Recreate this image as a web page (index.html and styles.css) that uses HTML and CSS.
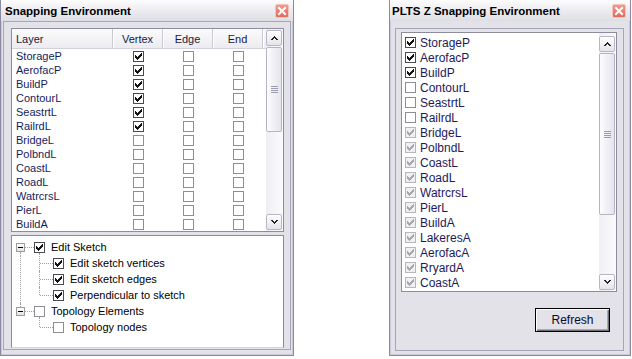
FILE: index.html
```html
<!DOCTYPE html>
<html>
<head>
<meta charset="utf-8">
<link rel="stylesheet" href="styles.css">
</head>
<body>
<div class="desk">
  <div class="win win-left">
    <div class="titlebar tb-left">
      <span class="title">Snapping Environment</span>
      <span class="close"><svg width="12" height="12" viewBox="0 0 12 12"><path d="M3 3L9 9M9 3L3 9" stroke="#fff" stroke-width="2" stroke-linecap="square"/></svg></span>
    </div>
    <div class="client">
      <div class="list">
        <div class="grid-main">
          <div class="hdr">
            <div class="hc layer">Layer</div>
            <div class="hc col">Vertex</div>
            <div class="hc col">Edge</div>
            <div class="hc col">End</div>
            <div class="hc fill"></div>
          </div>
          <div class="row"><div class="rc layer">StorageP</div><div class="rc col"><span class="cb on"><svg class="ck" viewBox="0 0 9 9"><use href="#chk"/></svg></span></div><div class="rc col"><span class="cb"></span></div><div class="rc col"><span class="cb"></span></div></div>
          <div class="row"><div class="rc layer">AerofacP</div><div class="rc col"><span class="cb on"><svg class="ck" viewBox="0 0 9 9"><use href="#chk"/></svg></span></div><div class="rc col"><span class="cb"></span></div><div class="rc col"><span class="cb"></span></div></div>
          <div class="row"><div class="rc layer">BuildP</div><div class="rc col"><span class="cb on"><svg class="ck" viewBox="0 0 9 9"><use href="#chk"/></svg></span></div><div class="rc col"><span class="cb"></span></div><div class="rc col"><span class="cb"></span></div></div>
          <div class="row"><div class="rc layer">ContourL</div><div class="rc col"><span class="cb on"><svg class="ck" viewBox="0 0 9 9"><use href="#chk"/></svg></span></div><div class="rc col"><span class="cb"></span></div><div class="rc col"><span class="cb"></span></div></div>
          <div class="row"><div class="rc layer">SeastrtL</div><div class="rc col"><span class="cb on"><svg class="ck" viewBox="0 0 9 9"><use href="#chk"/></svg></span></div><div class="rc col"><span class="cb"></span></div><div class="rc col"><span class="cb"></span></div></div>
          <div class="row"><div class="rc layer">RailrdL</div><div class="rc col"><span class="cb on"><svg class="ck" viewBox="0 0 9 9"><use href="#chk"/></svg></span></div><div class="rc col"><span class="cb"></span></div><div class="rc col"><span class="cb"></span></div></div>
          <div class="row"><div class="rc layer">BridgeL</div><div class="rc col"><span class="cb"></span></div><div class="rc col"><span class="cb"></span></div><div class="rc col"><span class="cb"></span></div></div>
          <div class="row"><div class="rc layer">PolbndL</div><div class="rc col"><span class="cb"></span></div><div class="rc col"><span class="cb"></span></div><div class="rc col"><span class="cb"></span></div></div>
          <div class="row"><div class="rc layer">CoastL</div><div class="rc col"><span class="cb"></span></div><div class="rc col"><span class="cb"></span></div><div class="rc col"><span class="cb"></span></div></div>
          <div class="row"><div class="rc layer">RoadL</div><div class="rc col"><span class="cb"></span></div><div class="rc col"><span class="cb"></span></div><div class="rc col"><span class="cb"></span></div></div>
          <div class="row"><div class="rc layer">WatrcrsL</div><div class="rc col"><span class="cb"></span></div><div class="rc col"><span class="cb"></span></div><div class="rc col"><span class="cb"></span></div></div>
          <div class="row"><div class="rc layer">PierL</div><div class="rc col"><span class="cb"></span></div><div class="rc col"><span class="cb"></span></div><div class="rc col"><span class="cb"></span></div></div>
          <div class="row"><div class="rc layer">BuildA</div><div class="rc col"><span class="cb"></span></div><div class="rc col"><span class="cb"></span></div><div class="rc col"><span class="cb"></span></div></div>
        </div>
        <div class="vs vs-left">
          <div class="sbtn"><svg width="7" height="4" viewBox="0 0 7 4"><use href="#up"/></svg></div>
          <div class="thumb th-left"><svg width="7" height="7" viewBox="0 0 7 7"><use href="#grip"/></svg></div>
          <div class="spacer"></div>
          <div class="sbtn"><svg width="7" height="4" viewBox="0 0 7 4"><use href="#down"/></svg></div>
        </div>
      </div>
      <div class="tree">
        <div class="node">
          <div class="trow"><span class="exp exp-first"><i></i></span><span class="hl"></span><span class="cb on"><svg class="ck" viewBox="0 0 9 9"><use href="#chk"/></svg></span><span class="tl">Edit Sketch</span></div>
          <div class="kids guide">
            <div class="trow child first"><span class="conn"></span><span class="cb on"><svg class="ck" viewBox="0 0 9 9"><use href="#chk"/></svg></span><span class="tl">Edit sketch vertices</span></div>
            <div class="trow child"><span class="conn"></span><span class="cb on"><svg class="ck" viewBox="0 0 9 9"><use href="#chk"/></svg></span><span class="tl">Edit sketch edges</span></div>
            <div class="trow child last"><span class="conn"></span><span class="cb on"><svg class="ck" viewBox="0 0 9 9"><use href="#chk"/></svg></span><span class="tl">Perpendicular to sketch</span></div>
          </div>
        </div>
        <div class="node">
          <div class="trow"><span class="exp exp-second"><i></i></span><span class="hl"></span><span class="cb"></span><span class="tl">Topology Elements</span></div>
          <div class="kids">
            <div class="trow child first last"><span class="conn"></span><span class="cb"></span><span class="tl">Topology nodes</span></div>
          </div>
        </div>
      </div>
    </div>
  </div>

  <div class="win win-right">
    <div class="titlebar tb-right">
      <span class="title">PLTS Z Snapping Environment</span>
      <span class="close"><svg width="12" height="12" viewBox="0 0 12 12"><path d="M3 3L9 9M9 3L3 9" stroke="#fff" stroke-width="2" stroke-linecap="square"/></svg></span>
    </div>
    <div class="frame">
      <div class="lbox">
        <div class="items">
          <div class="item"><span class="cb on"><svg class="ck" viewBox="0 0 9 9"><use href="#chk"/></svg></span><span class="it">StorageP</span></div>
          <div class="item"><span class="cb on"><svg class="ck" viewBox="0 0 9 9"><use href="#chk"/></svg></span><span class="it">AerofacP</span></div>
          <div class="item"><span class="cb on"><svg class="ck" viewBox="0 0 9 9"><use href="#chk"/></svg></span><span class="it">BuildP</span></div>
          <div class="item"><span class="cb"></span><span class="it">ContourL</span></div>
          <div class="item"><span class="cb"></span><span class="it">SeastrtL</span></div>
          <div class="item"><span class="cb"></span><span class="it">RailrdL</span></div>
          <div class="item"><span class="cb dis"><svg class="ck" viewBox="0 0 9 9"><use href="#chk"/></svg></span><span class="it">BridgeL</span></div>
          <div class="item"><span class="cb dis"><svg class="ck" viewBox="0 0 9 9"><use href="#chk"/></svg></span><span class="it">PolbndL</span></div>
          <div class="item"><span class="cb dis"><svg class="ck" viewBox="0 0 9 9"><use href="#chk"/></svg></span><span class="it">CoastL</span></div>
          <div class="item"><span class="cb dis"><svg class="ck" viewBox="0 0 9 9"><use href="#chk"/></svg></span><span class="it">RoadL</span></div>
          <div class="item"><span class="cb dis"><svg class="ck" viewBox="0 0 9 9"><use href="#chk"/></svg></span><span class="it">WatrcrsL</span></div>
          <div class="item"><span class="cb dis"><svg class="ck" viewBox="0 0 9 9"><use href="#chk"/></svg></span><span class="it">PierL</span></div>
          <div class="item"><span class="cb dis"><svg class="ck" viewBox="0 0 9 9"><use href="#chk"/></svg></span><span class="it">BuildA</span></div>
          <div class="item"><span class="cb dis"><svg class="ck" viewBox="0 0 9 9"><use href="#chk"/></svg></span><span class="it">LakeresA</span></div>
          <div class="item"><span class="cb dis"><svg class="ck" viewBox="0 0 9 9"><use href="#chk"/></svg></span><span class="it">AerofacA</span></div>
          <div class="item"><span class="cb dis"><svg class="ck" viewBox="0 0 9 9"><use href="#chk"/></svg></span><span class="it">RryardA</span></div>
          <div class="item"><span class="cb dis"><svg class="ck" viewBox="0 0 9 9"><use href="#chk"/></svg></span><span class="it">CoastA</span></div>
        </div>
        <div class="vs vs-right">
          <div class="sbtn"><svg width="7" height="4" viewBox="0 0 7 4"><use href="#up"/></svg></div>
          <div class="thumb th-right"><svg width="7" height="7" viewBox="0 0 7 7"><use href="#grip"/></svg></div>
          <div class="spacer"></div>
          <div class="sbtn"><svg width="7" height="4" viewBox="0 0 7 4"><use href="#down"/></svg></div>
        </div>
      </div>
      <div class="btnrow"><div class="btn">Refresh</div></div>
    </div>
  </div>
</div>

<svg class="defs" width="0" height="0">
  <symbol id="chk" viewBox="0 0 9 9"><path d="M7 1h1v1h-1z M6 2h2v1h-2z M1 3h1v1h-1z M5 3h3v1h-3z M1 4h2v1h-2z M4 4h3v1h-3z M1 5h5v1h-5z M2 6h3v1h-3z M3 7h1v1h-1z"/></symbol>
  <symbol id="up" viewBox="0 0 7 4"><path d="M3 0h1v1h-1z M2 1h3v1h-3z M1 2h2v1h-2z M4 2h2v1h-2z M0 3h2v1h-2z M5 3h2v1h-2z" fill="#222"/></symbol>
  <symbol id="down" viewBox="0 0 7 4"><path d="M0 0h2v1h-2z M5 0h2v1h-2z M1 1h2v1h-2z M4 1h2v1h-2z M2 2h3v1h-3z M3 3h1v1h-1z" fill="#222"/></symbol>
  <symbol id="grip" viewBox="0 0 7 7"><path d="M0 0h7v1h-7z M0 2h7v1h-7z M0 4h7v1h-7z M0 6h7v1h-7z" fill="#9c9cae"/></symbol>
</svg>
</body>
</html>
```

FILE: styles.css
```css
* { box-sizing: border-box; margin: 0; padding: 0; }
html, body { margin: 0; background: #fff; }
body {
  width: 632px;
  height: 359px;
  overflow: hidden;
  font-family: "Liberation Sans", Arial, sans-serif;
  font-size: 11px;
  color: #000;
}
.defs { display: none; }
svg { display: block; shape-rendering: crispEdges; }

.desk { display: flex; align-items: flex-start; }

.win {
  background: #e3e2e8;
  border: 1px solid #8a8aa2;
  border-top: 0;
  box-shadow: inset 0 -1px 0 #c9c9d6, inset 1px 0 0 #c9c9d6, inset -1px 0 0 #c9c9d6;
  display: flex;
  flex-direction: column;
  height: 356px;
}
.win-left { width: 294px; padding: 0 2px 5px; }
.win-right { width: 242px; margin-left: 95px; padding: 0 6px 4px 5px; }

.titlebar {
  height: 21px;
  flex: none;
  display: flex;
  align-items: center;
  justify-content: space-between;
  background: linear-gradient(#fdfdfe, #e9e9ee 60%, #dedee6);
  padding-right: 4px;
}
.tb-left { margin: 0 -2px; padding-left: 4px; }
.tb-right { margin: 0 -6px 0 -5px; padding-left: 2px; }
.title {
  font-weight: bold;
  font-size: 11.5px;
  color: #000;
  padding-top: 1px;
}
.close {
  width: 14px;
  height: 14px;
  border: 1px solid #f3c3bd;
  border-radius: 2px;
  background: linear-gradient(#f09a8c, #e06a5c);
  display: flex;
  align-items: center;
  justify-content: center;
}
.close svg { shape-rendering: auto; }

/* left client */
.client {
  flex: 1;
  border: 1px solid #a6a6b8;
  padding: 6px 6px 0 7px;
  display: flex;
  flex-direction: column;
  gap: 3px;
}
.list {
  width: 273px;
  height: 204px;
  flex: none;
  border: 1px solid #8d8d9e;
  background: #fff;
  display: flex;
}
.grid-main { width: 254px; display: flex; flex-direction: column; }
.hdr {
  height: 20px;
  display: flex;
  background: linear-gradient(#fbfbfc, #ecebf0);
  border-bottom: 1px solid #d2d2da;
  color: #1a1a40;
}
.hc {
  display: flex;
  align-items: center;
  justify-content: center;
  border-right: 1px solid #c9c9d3;
  box-shadow: 1px 0 0 #fff;
}
.hc.layer { width: 101px; justify-content: flex-start; padding-left: 4px; }
.hc.col { width: 50px; }
.hc.fill { width: 3px; border-right: 0; box-shadow: none; }

.row { height: 14px; display: flex; align-items: center; }
.rc { height: 14px; display: flex; align-items: center; }
.rc.layer { width: 101px; padding-left: 4px; color: #151c5e; line-height: 14px; }
.rc.col { width: 50px; justify-content: center; }
.rc.col:nth-child(2) { padding-left: 1px; }

.cb {
  width: 11px;
  height: 11px;
  flex: none;
  border: 1px solid #8e8e92;
  background: #fff;
  display: flex;
}
.cb.on { border-color: #4a4a50; }
.cb .ck { width: 9px; height: 9px; fill: #111; }
.cb.dis { border-color: #b7b7bb; background: #f0f0f2; }
.cb.dis .ck { fill: #a8a8ac; }

/* scrollbars */
.vs {
  width: 17px;
  flex: none;
  background: linear-gradient(to right, #efeff3, #fbfbfd);
  display: flex;
  flex-direction: column;
}
.vs-left { padding: 1px 1px 1px 0; }
.vs-right { padding: 3px 1px 1px 0; }
.sbtn {
  height: 16px;
  flex: none;
  border: 1px solid #b6b6c8;
  border-radius: 2px;
  background: linear-gradient(#ffffff, #e3e3eb);
  display: flex;
  align-items: center;
  justify-content: center;
}
.thumb {
  flex: none;
  margin-top: 1px;
  border: 1px solid #b4b4c6;
  border-radius: 2px;
  background: linear-gradient(to right, #fdfdfe, #e4e4ec);
  display: flex;
  align-items: center;
  justify-content: center;
}
.th-left { height: 85px; }
.th-right { height: 162px; }
.spacer { flex: 1; }

/* tree */
.tree {
  width: 273px;
  height: 113px;
  flex: none;
  background: #fff;
  border: 1px solid #8a8a98;
  border-bottom-color: #d4d4dc;
  padding-top: 3px;
}
.trow {
  height: 16px;
  display: flex;
  align-items: center;
  padding-left: 4px;
}
.tl { margin-left: 6px; color: #000; white-space: nowrap; }
.exp {
  width: 9px;
  height: 9px;
  flex: none;
  position: relative;
  border: 1px solid #9a9e9f;
  background: linear-gradient(#ffffff, #e4e3e0);
  display: flex;
  align-items: center;
  justify-content: center;
}
.exp i { display: block; width: 5px; height: 1px; background: #000; }
.exp-first::after {
  content: "";
  position: absolute;
  left: 3px;
  top: 8px;
  height: 4px;
  border-left: 1px dotted #a0a0a0;
}
.exp-second::before {
  content: "";
  position: absolute;
  left: 3px;
  top: -5px;
  height: 4px;
  border-left: 1px dotted #a0a0a0;
}
.hl {
  width: 9px;
  height: 1px;
  flex: none;
  border-top: 1px dotted #a0a0a0;
}
.kids { margin-left: 8px; border-left: 1px solid transparent; }
.kids.guide { border-left: 1px dotted #a0a0a0; }
.trow.child { padding-left: 18px; }
.conn {
  width: 14px;
  height: 16px;
  flex: none;
  position: relative;
}
.conn::before {
  content: "";
  position: absolute;
  left: 0;
  top: 0;
  height: 16px;
  border-left: 1px dotted #a0a0a0;
}
.child.first .conn::before { top: -2px; height: 18px; }
.child.last .conn::before { height: 8px; }
.child.first.last .conn::before { height: 10px; }
.conn::after {
  content: "";
  position: absolute;
  left: 1px;
  top: 8px;
  width: 13px;
  border-top: 1px dotted #a0a0a0;
}

/* right window */
.frame {
  margin-top: 7px;
  height: 323px;
  flex: none;
  border: 1px solid #a5a5b6;
  padding: 3px 5px 0 5px;
  display: flex;
  flex-direction: column;
}
.lbox {
  width: 216px;
  height: 260px;
  flex: none;
  border: 1px solid #8c8c9c;
  background: #fff;
  display: flex;
}
.items {
  flex: 1;
  padding-top: 2px;
  padding-left: 3px;
  display: flex;
  flex-direction: column;
}
.item { height: 15px; display: flex; align-items: center; }
.it { margin-left: 4px; font-size: 12px; color: #1d1a5c; white-space: nowrap; }
.btnrow { display: flex; justify-content: flex-end; padding-right: 8px; margin-top: 16px; }
.btn {
  width: 75px;
  height: 24px;
  border: 1px solid #000;
  background: #e3e2e8;
  box-shadow: inset 1px 1px 0 #fff, inset -1px -1px 0 #6e6e78, inset -2px -2px 0 #a8a8b4;
  display: flex;
  align-items: center;
  justify-content: center;
  font-size: 12px;
  color: #0a0a30;
  padding-bottom: 1px;
}
```
